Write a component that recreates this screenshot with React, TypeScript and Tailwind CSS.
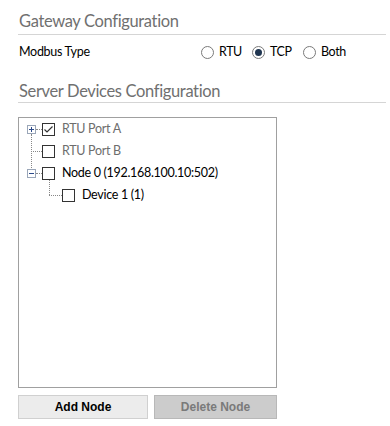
import React from 'react';

const font = { fontFamily: 'Lato, "Noto Sans", sans-serif' };

const Radio: React.FC<{ label: string; checked?: boolean }> = ({ label, checked }) => (
  <label className="flex items-center gap-[5px] w-[51px]">
    <span className="w-[13px] h-[13px] rounded-full border border-[#7a7a7a] bg-white flex items-center justify-center">
      {checked && <span className="w-[7px] h-[7px] rounded-full bg-[#1f3550]" />}
    </span>
    <span className="text-[12.5px] tracking-[-0.4px] text-black">{label}</span>
  </label>
);

const Expander: React.FC<{ open?: boolean }> = ({ open }) => (
  <span className="w-[9px] h-[9px] border border-[#9aa6b8] bg-white flex items-center justify-center relative">
    <span className="absolute w-[5px] h-px bg-[#2b4a8a]" />
    {!open && <span className="absolute w-px h-[5px] bg-[#2b4a8a]" />}
  </span>
);

const Check: React.FC<{ checked?: boolean }> = ({ checked }) => (
  <span className="w-[13px] h-[13px] border border-[#333] bg-white flex items-center justify-center shrink-0">
    {checked && (
      <svg width="11" height="11" viewBox="0 0 11 11">
        <path d="M1.5 5.5 L4 8 L9.5 2.5" fill="none" stroke="#333" strokeWidth="1.2" />
      </svg>
    )}
  </span>
);

export default function App() {
  return (
    <div className="w-[390px] h-[426px] bg-white pl-[18px] pt-[10px]" style={font}>
      <h2 className="text-[16.5px] tracking-[-0.35px] text-[#707070] pl-px h-[22px] leading-[22px]">Gateway Configuration</h2>
      <div className="h-px bg-[#d5d5d5] mt-[2px] mr-[4px]" />

      <div className="flex items-center h-[34px]">
        <span className="text-[12.5px] tracking-[-0.3px] text-black pl-px w-[183px]">Modbus Type</span>
        <div className="flex items-center">
          <Radio label="RTU" />
          <Radio label="TCP" checked />
          <Radio label="Both" />
        </div>
      </div>

      <h2 className="text-[16.5px] tracking-[-0.35px] text-[#707070] pl-px h-[22px] leading-[22px] mt-[11px]">Server Devices Configuration</h2>
      <div className="h-px bg-[#d5d5d5] mr-[4px]" />

      <div className="w-[259px] h-[271px] border border-[#a0a0a0] mt-[14px] text-[12.5px] tracking-[-0.3px]">
        <div className="relative">
          <div className="absolute left-[12px] top-[16px] h-[34px] border-l border-dotted border-[#888]" />
          <div className="absolute left-[30px] top-[62px] h-[15px] border-l border-dotted border-[#888]" />

          <div className="flex items-center h-[22px] pl-[8px]">
            <Expander />
            <span className="w-[6px] border-t border-dotted border-[#888]" />
            <Check checked />
            <span className="ml-[7px] text-[#6d6d6d]">RTU Port A</span>
          </div>
          <div className="flex items-center h-[22px] pl-[12px]">
            <span className="w-[11px] border-t border-dotted border-[#888]" />
            <Check />
            <span className="ml-[7px] text-[#6d6d6d]">RTU Port B</span>
          </div>
          <div className="flex items-center h-[22px] pl-[8px]">
            <Expander open />
            <span className="w-[6px] border-t border-dotted border-[#888]" />
            <Check />
            <span className="ml-[7px] text-black">Node 0 (192.168.100.10:502)</span>
          </div>
          <div className="flex items-center h-[22px] pl-[30px]">
            <span className="w-[13px] border-t border-dotted border-[#888]" />
            <Check />
            <span className="ml-[7px] text-black">Device 1 (1)</span>
          </div>
        </div>
      </div>

      <div className="flex gap-[6px] mt-[7px]">
        <button className="w-[130px] h-[24px] bg-[#ececec] border border-[#d0d0d0] text-[12px] font-bold text-black" style={{ fontFamily: '"Liberation Sans", Arial, sans-serif' }}>
          Add Node
        </button>
        <button className="w-[123px] h-[24px] bg-[#cccccc] border border-[#b8b8b8] text-[12px] font-bold text-[#7a7a7a]" style={{ fontFamily: '"Liberation Sans", Arial, sans-serif' }}>
          Delete Node
        </button>
      </div>
    </div>
  );
}
